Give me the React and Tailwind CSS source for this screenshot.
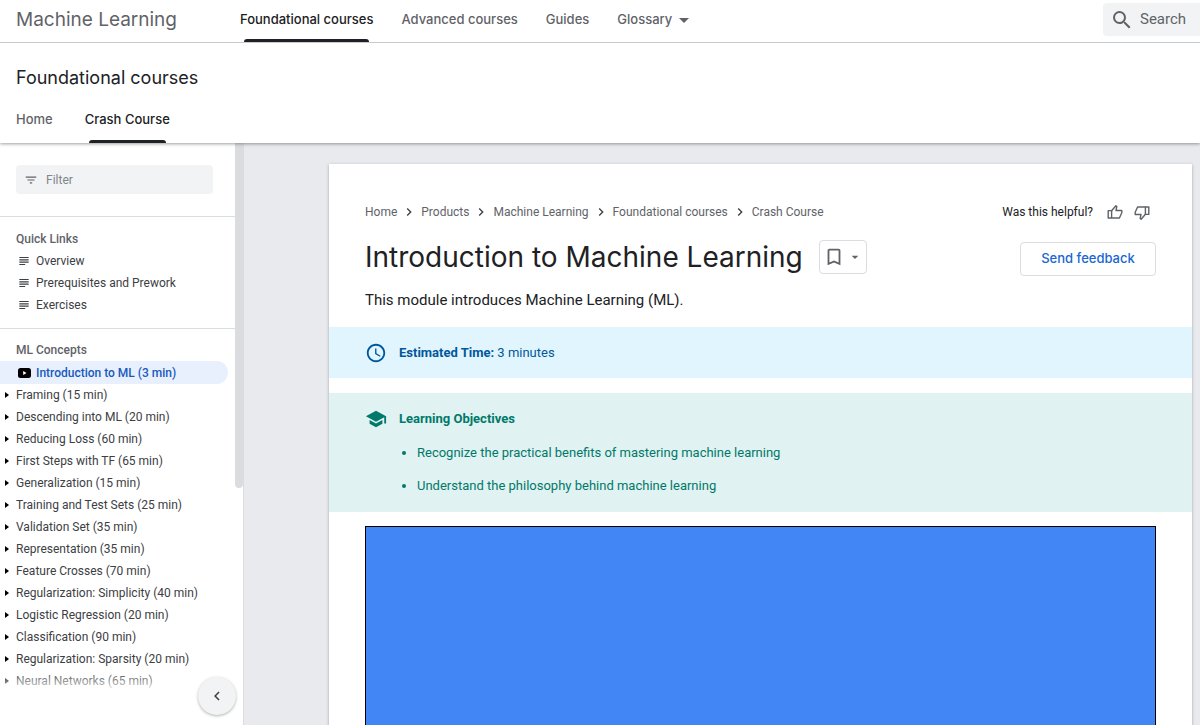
import {
  MdSearch,
  MdFilterList,
  MdSubject,
  MdChevronLeft,
  MdChevronRight,
  MdArrowDropDown,
  MdBookmarkBorder,
  MdSchedule,
  MdSchool,
} from "react-icons/md";

const topTabs = ["Foundational courses", "Advanced courses", "Guides", "Glossary"];
const quickLinks = ["Overview", "Prerequisites and Prework", "Exercises"];
const crumbs = ["Home", "Products", "Machine Learning", "Foundational courses", "Crash Course"];

const concepts = [
  "Framing (15 min)",
  "Descending into ML (20 min)",
  "Reducing Loss (60 min)",
  "First Steps with TF (65 min)",
  "Generalization (15 min)",
  "Training and Test Sets (25 min)",
  "Validation Set (35 min)",
  "Representation (35 min)",
  "Feature Crosses (70 min)",
  "Regularization: Simplicity (40 min)",
  "Logistic Regression (20 min)",
  "Classification (90 min)",
  "Regularization: Sparsity (20 min)",
  "Neural Networks (65 min)",
];

const objectives = [
  "Recognize the practical benefits of mastering machine learning",
  "Understand the philosophy behind machine learning",
];

function ThumbIcon({ className }) {
  return (
    <svg viewBox="0 0 16 16" className={className} fill="none" stroke="currentColor" strokeWidth="1.4" strokeLinejoin="round">
      <path d="M1.2 6.6h3.4V14H1.2z" />
      <path d="M4.6 6.8 8.9 1.7l.9.9-.8 3.900h5.800v2.300L12.400 14H4.600" />
    </svg>
  );
}

function VideoIcon() {
  return (
    <svg viewBox="0 0 13 10" className="h-[10px] w-[13px]">
      <rect width="13" height="10" rx="2.5" fill="#000" />
      <path d="M5.2 3v4l3.300-2z" fill="#fff" />
    </svg>
  );
}

function Tab({ label, active, menu }) {
  return (
    <a href="#" className={`relative flex items-center pb-[2px] font-medium ${active ? "text-[#202124]" : "text-[#5f6368]"}`}>
      {label}
      {menu && <MdArrowDropDown className="h-6 w-6" />}
      {active && <span className="absolute inset-x-1 bottom-0 h-[3px] rounded-t-sm bg-[#202124]" />}
    </a>
  );
}

function Header() {
  return (
    <header className="relative z-10 shrink-0 bg-white font-['Inter',sans-serif] shadow-[0_1px_3px_rgba(60,64,67,0.5)]">
      <div className="flex h-[43px] border-b border-[#c8cacd]">
        <a href="#" className="flex w-[240px] items-center pb-[2px] pl-4 text-[19px] text-[#5f6368]">
          Machine Learning
        </a>
        <nav className="flex gap-7 text-[13px]">
          {topTabs.map((t, i) => (
            <Tab key={t} label={t} active={i === 0} menu={t === "Glossary"} />
          ))}
        </nav>
        <label className="mt-[3px] ml-auto flex h-[33px] w-[97px] items-center rounded-l bg-[#f1f3f4] pl-[7px] font-['Roboto',sans-serif]">
          <MdSearch className="h-6 w-6 shrink-0 text-[#5f6368]" />
          <input aria-label="Search" placeholder="Search" className="ml-[6px] w-full min-w-0 bg-transparent text-[15px] outline-none placeholder:text-[#5f6368]" />
        </label>
      </div>
      <div className="px-4 pt-[21px]">
        <h2 className="text-lg text-[#202124]">Foundational courses</h2>
        <nav className="mt-[7px] flex h-11 gap-8 text-[13px]">
          <Tab label="Home" />
          <Tab label="Crash Course" active />
        </nav>
      </div>
    </header>
  );
}

function Sidebar() {
  return (
    <aside className="relative flex w-[244px] shrink-0 overflow-hidden border-r border-[#dadce0] bg-white text-[12px] text-[#3c4043]">
      <div className="min-w-0 flex-1">
        <div className="border-b border-[#dadce0] px-4 py-[22px]">
          <label className="mr-[6px] flex h-[29px] items-center gap-2 rounded bg-[#f1f3f4] px-2">
            <MdFilterList className="h-[14px] w-[14px] shrink-0 text-[#5f6368]" />
            <input aria-label="Filter" placeholder="Filter" className="w-full min-w-0 bg-transparent outline-none placeholder:text-[#80868b]" />
          </label>
        </div>
        <nav className="border-b border-[#dadce0] pt-[11px] pb-3">
          <h3 className="pl-4 leading-[22px] font-medium text-[#5f6368]">Quick Links</h3>
          {quickLinks.map((q) => (
            <a key={q} href="#" className="flex h-[22px] items-center gap-[5px] pl-[17px]">
              <MdSubject className="h-[14px] w-[14px]" />
              {q}
            </a>
          ))}
        </nav>
        <nav className="pt-[10px]">
          <h3 className="pl-4 leading-[22px] font-medium text-[#5f6368]">ML Concepts</h3>
          <a href="#" className="mr-[7px] flex h-[23px] items-center gap-[5px] rounded-r-full bg-[#e8f0fe] pl-[18px] font-medium text-[#185abc]">
            <VideoIcon />
            Introduction to ML (3 min)
          </a>
          {concepts.map((c) => (
            <a key={c} href="#" className="flex h-[22px] items-center">
              <span className="ml-[5px] h-0 w-0 border-y-[3px] border-l-[4px] border-y-transparent border-l-black" />
              <span className="ml-[7px]">{c}</span>
            </a>
          ))}
        </nav>
      </div>
      <div className="w-2">
        <div className="h-[345px] rounded-b bg-[#dadce0]" />
      </div>
      <div className="absolute right-2 bottom-0 left-0 h-[52px] bg-gradient-to-b from-white/10 to-white to-40%" />
      <button aria-label="Collapse side navigation" className="absolute right-[7px] bottom-[10px] grid h-[38px] w-[38px] place-items-center rounded-full bg-[#f1f3f4] text-[#3c4043] shadow-[0_1px_3px_rgba(60,64,67,0.4)]">
        <MdChevronLeft className="h-[18px] w-[18px]" />
      </button>
    </aside>
  );
}

function Article() {
  return (
    <article className="mt-[21px] mr-2 ml-[85px] min-w-0 flex-1 bg-white shadow-[0_1px_3px_rgba(60,64,67,0.4)]">
      <div className="px-9 pt-9">
        <div className="flex h-6 items-center justify-between text-[12px]">
          <nav aria-label="Breadcrumb" className="flex items-center gap-1 text-[#5f6368]">
            {crumbs.map((c, i) => (
              <span key={c} className="flex items-center gap-1">
                {i > 0 && <MdChevronRight className="h-4 w-4 text-[#3c4043]" />}
                <a href="#">{c}</a>
              </span>
            ))}
          </nav>
          <div className="flex items-center text-[#202124]">
            Was this helpful?
            <button aria-label="Helpful" className="ml-[14px]">
              <ThumbIcon className="h-4 w-4 text-[#5f6368]" />
            </button>
            <button aria-label="Not helpful" className="mr-[6px] ml-[11px] pt-[2px]">
              <ThumbIcon className="h-4 w-4 rotate-180 text-[#5f6368]" />
            </button>
          </div>
        </div>
        <div className="mt-4 flex h-9 items-end justify-between font-['Inter',sans-serif]">
          <div className="flex items-center gap-4 self-start">
            <h1 className="text-[28px] leading-[34px] text-[#202124]">Introduction to Machine Learning</h1>
            <button aria-label="Save page" className="flex h-[34px] w-12 items-center justify-center gap-[2px] rounded-sm border border-[#dadce0] text-[#5f6368]">
              <MdBookmarkBorder className="h-[22px] w-[22px]" />
              <MdArrowDropDown className="h-4 w-4" />
            </button>
          </div>
          <button className="h-[34px] w-[136px] rounded-sm border border-[#dadce0] text-[13px] font-medium text-[#1967d2]">Send feedback</button>
        </div>
        <p className="mt-[13px] text-[15px] leading-[22px] text-[#202124]">This module introduces Machine Learning (ML).</p>
      </div>
      <div className="mt-4 flex h-[51px] items-center gap-3 bg-[#e1f5fe] px-9 text-[13px] text-[#01579b]">
        <MdSchedule className="h-[22px] w-[22px]" />
        <p>
          <strong className="font-bold">Estimated Time:</strong> 3 minutes
        </p>
      </div>
      <div className="mt-[15px] bg-[#e0f2f1] px-9 py-[15px] text-[13px] text-[#00796b]">
        <h4 className="flex h-[22px] items-center gap-3 font-bold">
          <MdSchool className="h-[22px] w-[22px]" />
          Learning Objectives
        </h4>
        <ul className="mt-3 ml-[52px] list-disc space-y-[11px] leading-[22px]">
          {objectives.map((o) => (
            <li key={o}>{o}</li>
          ))}
        </ul>
      </div>
      <div className="mx-9 mt-[14px] h-[444px] border border-black bg-[#4285f4]" />
    </article>
  );
}

export default function App() {
  return (
    <div className="flex h-screen flex-col overflow-hidden bg-[#e8eaed] font-['Roboto',sans-serif]">
      <Header />
      <div className="flex min-h-0 flex-1">
        <Sidebar />
        <main className="flex min-w-0 flex-1 items-start overflow-hidden">
          <Article />
        </main>
      </div>
    </div>
  );
}
